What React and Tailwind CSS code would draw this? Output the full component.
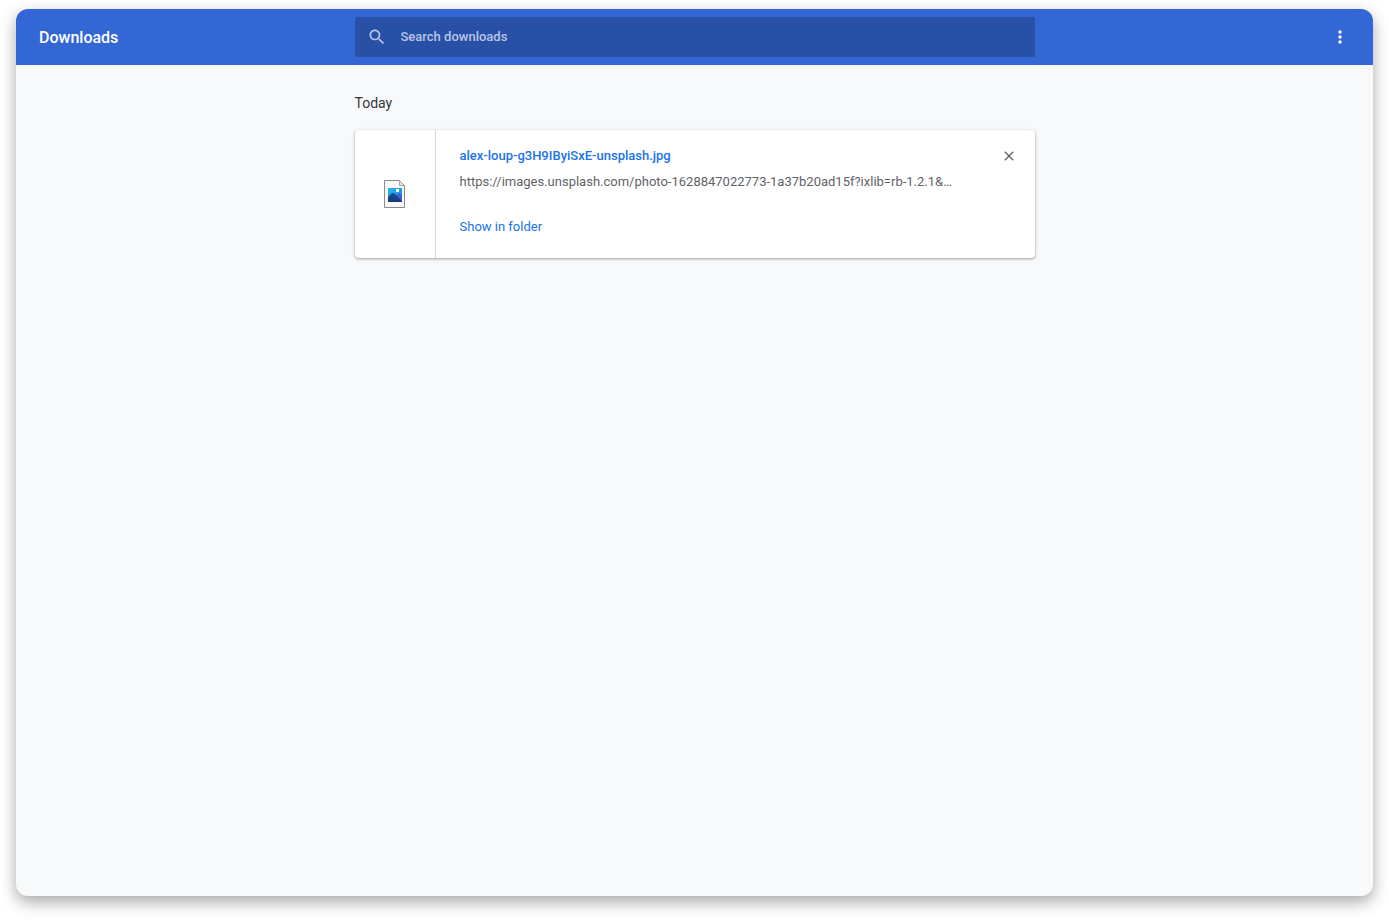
import React, { useState } from 'react';

const initialDownloads = [
  {
    id: 1,
    name: 'alex-loup-g3H9IByiSxE-unsplash.jpg',
    url: 'https://images.unsplash.com/photo-1628847022773-1a37b20ad15f?ixlib=rb-1.2.1&…',
  },
];

const SearchIcon = () => (
  <svg className="w-5 h-5 shrink-0" viewBox="0 0 24 24" fill="currentColor" aria-hidden="true">
    <path d="M15.5 14h-.79l-.28-.27C15.41 12.59 16 11.11 16 9.5 16 5.91 13.09 3 9.5 3S3 5.91 3 9.5 5.91 16 9.5 16c1.61 0 3.09-.59 4.23-1.57l.27.28v.79l5 4.99L20.49 19l-4.99-5zm-6 0C7.01 14 5 11.99 5 9.5S7.01 5 9.5 5 14 7.01 14 9.5 11.99 14 9.5 14z" />
  </svg>
);

const MoreIcon = () => (
  <svg className="w-5 h-5" viewBox="0 0 24 24" fill="currentColor" aria-hidden="true">
    <path d="M12 8c1.1 0 2-.9 2-2s-.9-2-2-2-2 .9-2 2 .9 2 2 2zm0 2c-1.1 0-2 .9-2 2s.9 2 2 2 2-.9 2-2-.9-2-2-2zm0 6c-1.1 0-2 .9-2 2s.9 2 2 2 2-.9 2-2-.9-2-2-2z" />
  </svg>
);

const CloseIcon = () => (
  <svg className="w-4 h-4" viewBox="0 0 24 24" fill="currentColor" aria-hidden="true">
    <path d="M19 6.41L17.59 5 12 10.59 6.41 5 5 6.41 10.59 12 5 17.59 6.41 19 12 13.41 17.59 19 19 17.59 13.41 12z" />
  </svg>
);

const ImageFileIcon = () => (
  <svg className="w-8 h-8" viewBox="0 0 32 32" aria-hidden="true">
    <defs>
      <linearGradient id="sky" x1="0" y1="0" x2="1" y2="1">
        <stop offset="0" stopColor="#25b4f0" />
        <stop offset="1" stopColor="#1f86e0" />
      </linearGradient>
      <linearGradient id="hill" x1="0" y1="0" x2="0" y2="1">
        <stop offset="0" stopColor="#1c4f92" />
        <stop offset="1" stopColor="#123a78" />
      </linearGradient>
    </defs>
    <path d="M5.5 2.5h15l5 5v22h-20z" fill="#f9f9f9" stroke="#8a8a8a" />
    <path d="M20.5 2.5v5h5z" fill="#e6e6e6" stroke="#a3a3a3" />
    <path d="M9 10h14v14H9z" fill="url(#sky)" />
    <path d="M16 18l4-3 3 2v7h-7z" fill="#3f62cc" />
    <path d="M9 19l4-4h2l8 8v1H9z" fill="url(#hill)" />
    <path d="M17 11h3v3h-3z" fill="#eefaff" />
  </svg>
);

const DownloadItem = ({ item, onRemove }) => (
  <li className="flex bg-white rounded shadow-[0_1px_2px_0_rgba(60,64,67,0.3),0_1px_3px_1px_rgba(60,64,67,0.15)]">
    <div className="flex w-20 shrink-0 items-center justify-center">
      <ImageFileIcon />
    </div>
    <div className="flex flex-1 min-w-0 items-start border-l border-[#d3d5d8] pt-4 pb-[19px] pl-6 pr-4">
      <div className="flex-1 min-w-0">
        <a href="#file" className="block w-fit text-[13px] leading-5 font-medium text-[#1a73e8]">
          {item.name}
        </a>
        <a href="#source" className="mt-1 block truncate text-[13px] leading-6 text-[#5f6368]">
          {item.url}
        </a>
        <button type="button" className="mt-[21px] block text-[13px] leading-6 text-[#1a73e8]">
          Show in folder
        </button>
      </div>
      <button
        type="button"
        aria-label="Remove from list"
        onClick={() => onRemove(item.id)}
        className="flex w-5 h-5 items-center justify-center text-[#5f6368]"
      >
        <CloseIcon />
      </button>
    </div>
  </li>
);

const App = () => {
  const [downloads, setDownloads] = useState(initialDownloads);
  const [query, setQuery] = useState('');

  const removeDownload = (id) => {
    setDownloads(downloads.filter((item) => item.id !== id));
  };

  const visible = downloads.filter((item) => item.name.toLowerCase().includes(query.toLowerCase()));

  return (
    <div className="flex min-h-screen bg-white px-4 pt-[9px] pb-6 font-[Roboto,sans-serif]">
      <div className="flex flex-1 flex-col overflow-hidden rounded-xl bg-[#f8f9fb] shadow-[0_6px_16px_rgba(0,0,0,0.35)]">
        <header className="flex h-14 items-center bg-[#3367d6] text-white">
          <h1 className="flex-1 pt-0.5 pl-[23px] text-base font-medium">Downloads</h1>
          <label className="flex h-10 w-full max-w-[680px] items-center gap-3.5 rounded-xs bg-[#2850a7] px-3 text-[#b8c6e6]">
            <SearchIcon />
            <input
              type="text"
              aria-label="Search downloads"
              placeholder="Search downloads"
              value={query}
              onChange={(e) => setQuery(e.target.value)}
              className="flex-1 bg-transparent text-[13px] font-medium placeholder:text-[#b8c6e6] focus:outline-none"
            />
          </label>
          <div className="flex flex-1 justify-end pr-[23px]">
            <button type="button" aria-label="More actions">
              <MoreIcon />
            </button>
          </div>
        </header>

        <main className="mx-auto w-full max-w-[680px] pt-7">
          <h2 className="text-sm text-[#333639]">Today</h2>
          <ul className="mt-[17px]">
            {visible.map((item) => (
              <DownloadItem key={item.id} item={item} onRemove={removeDownload} />
            ))}
          </ul>
        </main>
      </div>
    </div>
  );
};

export default App;
